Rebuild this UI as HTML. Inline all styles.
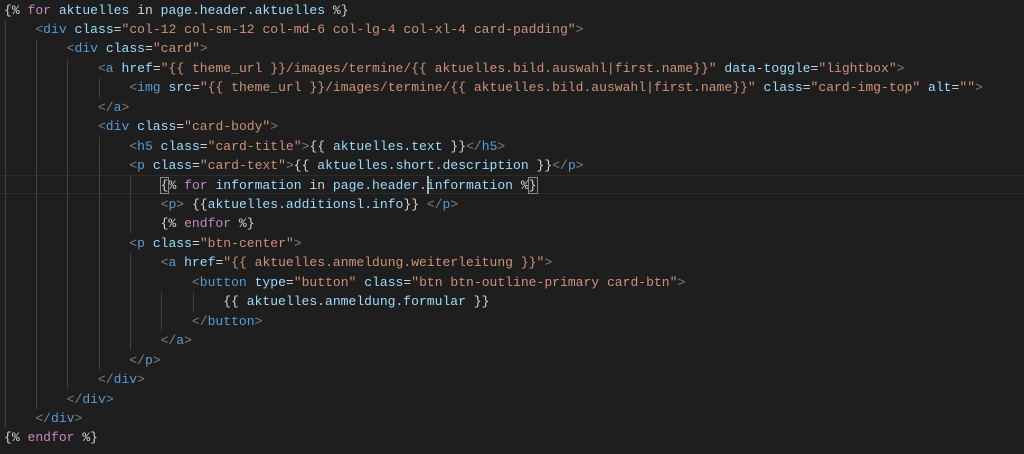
<!DOCTYPE html>
<html><head><meta charset="utf-8"><style>
html,body{margin:0;padding:0;background:#1e1e1e;width:1024px;height:454px;overflow:hidden}
#ed{position:absolute;left:4px;top:0.5px;font-family:"Liberation Mono",monospace;font-size:13.05px;line-height:19.45px;white-space:pre;color:#d4d4d4}
.k{color:#c586c0}.v{color:#9cdcfe}.t{color:#569cd6}.p{color:#808080}.s{color:#ce9178}.a{color:#9cdcfe}
.g{position:absolute;width:1px;background:#404040}
.cur{position:absolute;left:0;top:175px;width:1024px;height:19px;border-top:1px solid #2c2c2c;border-bottom:1px solid #2c2c2c;box-sizing:border-box}
.bx{outline:1px solid #888;}
.caret{position:absolute;left:427px;top:176px;width:1.5px;height:18px;background:#aeafad}
</style></head><body>
<div class="cur"></div>
<div class="g" style="left:5px;top:20px;height:408px"></div>
<div class="g" style="left:36px;top:39px;height:370px"></div>
<div class="g" style="left:67px;top:59px;height:330px"></div>
<div class="g" style="left:99px;top:78px;height:20px"></div>
<div class="g" style="left:99px;top:137px;height:233px"></div>
<div class="g" style="left:130px;top:175px;height:58px"></div>
<div class="g" style="left:130px;top:253px;height:97px"></div>
<div class="g" style="left:161px;top:292px;height:39px"></div>
<div class="g" style="left:193px;top:292px;height:20px"></div>
<div class="caret"></div>
<div id="ed"><span>{% </span><span class="k">for</span> <span class="v">aktuelles</span> in <span class="v">page.header.aktuelles</span> %}
    <span class="p">&lt;</span><span class="t">div</span> <span class="a">class</span>=<span class="s">"col-12 col-sm-12 col-md-6 col-lg-4 col-xl-4 card-padding"</span><span class="p">&gt;</span>
        <span class="p">&lt;</span><span class="t">div</span> <span class="a">class</span>=<span class="s">"card"</span><span class="p">&gt;</span>
            <span class="p">&lt;</span><span class="t">a</span> <span class="a">href</span>=<span class="s">"{{ theme_url }}/images/termine/{{ aktuelles.bild.auswahl|first.name}}"</span> <span class="a">data-toggle</span>=<span class="s">"lightbox"</span><span class="p">&gt;</span>
                <span class="p">&lt;</span><span class="t">img</span> <span class="a">src</span>=<span class="s">"{{ theme_url }}/images/termine/{{ aktuelles.bild.auswahl|first.name}}"</span> <span class="a">class</span>=<span class="s">"card-img-top"</span> <span class="a">alt</span>=<span class="s">""</span><span class="p">&gt;</span>
            <span class="p">&lt;/</span><span class="t">a</span><span class="p">&gt;</span>
            <span class="p">&lt;</span><span class="t">div</span> <span class="a">class</span>=<span class="s">"card-body"</span><span class="p">&gt;</span>
                <span class="p">&lt;</span><span class="t">h5</span> <span class="a">class</span>=<span class="s">"card-title"</span><span class="p">&gt;</span>{{ <span class="v">aktuelles.text</span> }}<span class="p">&lt;/</span><span class="t">h5</span><span class="p">&gt;</span>
                <span class="p">&lt;</span><span class="t">p</span> <span class="a">class</span>=<span class="s">"card-text"</span><span class="p">&gt;</span>{{ <span class="v">aktuelles.short.description</span> }}<span class="p">&lt;/</span><span class="t">p</span><span class="p">&gt;</span>
                    <span class="bx">{</span>% <span class="k">for</span> <span class="v">information</span> in <span class="v">page.header.information</span> %<span class="bx">}</span>
                    <span class="p">&lt;</span><span class="t">p</span><span class="p">&gt;</span> {{<span class="v">aktuelles.additionsl.info</span>}} <span class="p">&lt;/</span><span class="t">p</span><span class="p">&gt;</span>
                    {% <span class="k">endfor</span> %}
                <span class="p">&lt;</span><span class="t">p</span> <span class="a">class</span>=<span class="s">"btn-center"</span><span class="p">&gt;</span>
                    <span class="p">&lt;</span><span class="t">a</span> <span class="a">href</span>=<span class="s">"{{ aktuelles.anmeldung.weiterleitung }}"</span><span class="p">&gt;</span>
                        <span class="p">&lt;</span><span class="t">button</span> <span class="a">type</span>=<span class="s">"button"</span> <span class="a">class</span>=<span class="s">"btn btn-outline-primary card-btn"</span><span class="p">&gt;</span>
                            {{ <span class="v">aktuelles.anmeldung.formular</span> }}
                        <span class="p">&lt;/</span><span class="t">button</span><span class="p">&gt;</span>
                    <span class="p">&lt;/</span><span class="t">a</span><span class="p">&gt;</span>
                <span class="p">&lt;/</span><span class="t">p</span><span class="p">&gt;</span>
            <span class="p">&lt;/</span><span class="t">div</span><span class="p">&gt;</span>
        <span class="p">&lt;/</span><span class="t">div</span><span class="p">&gt;</span>
    <span class="p">&lt;/</span><span class="t">div</span><span class="p">&gt;</span>
{% <span class="k">endfor</span> %}</div>
</body></html>
